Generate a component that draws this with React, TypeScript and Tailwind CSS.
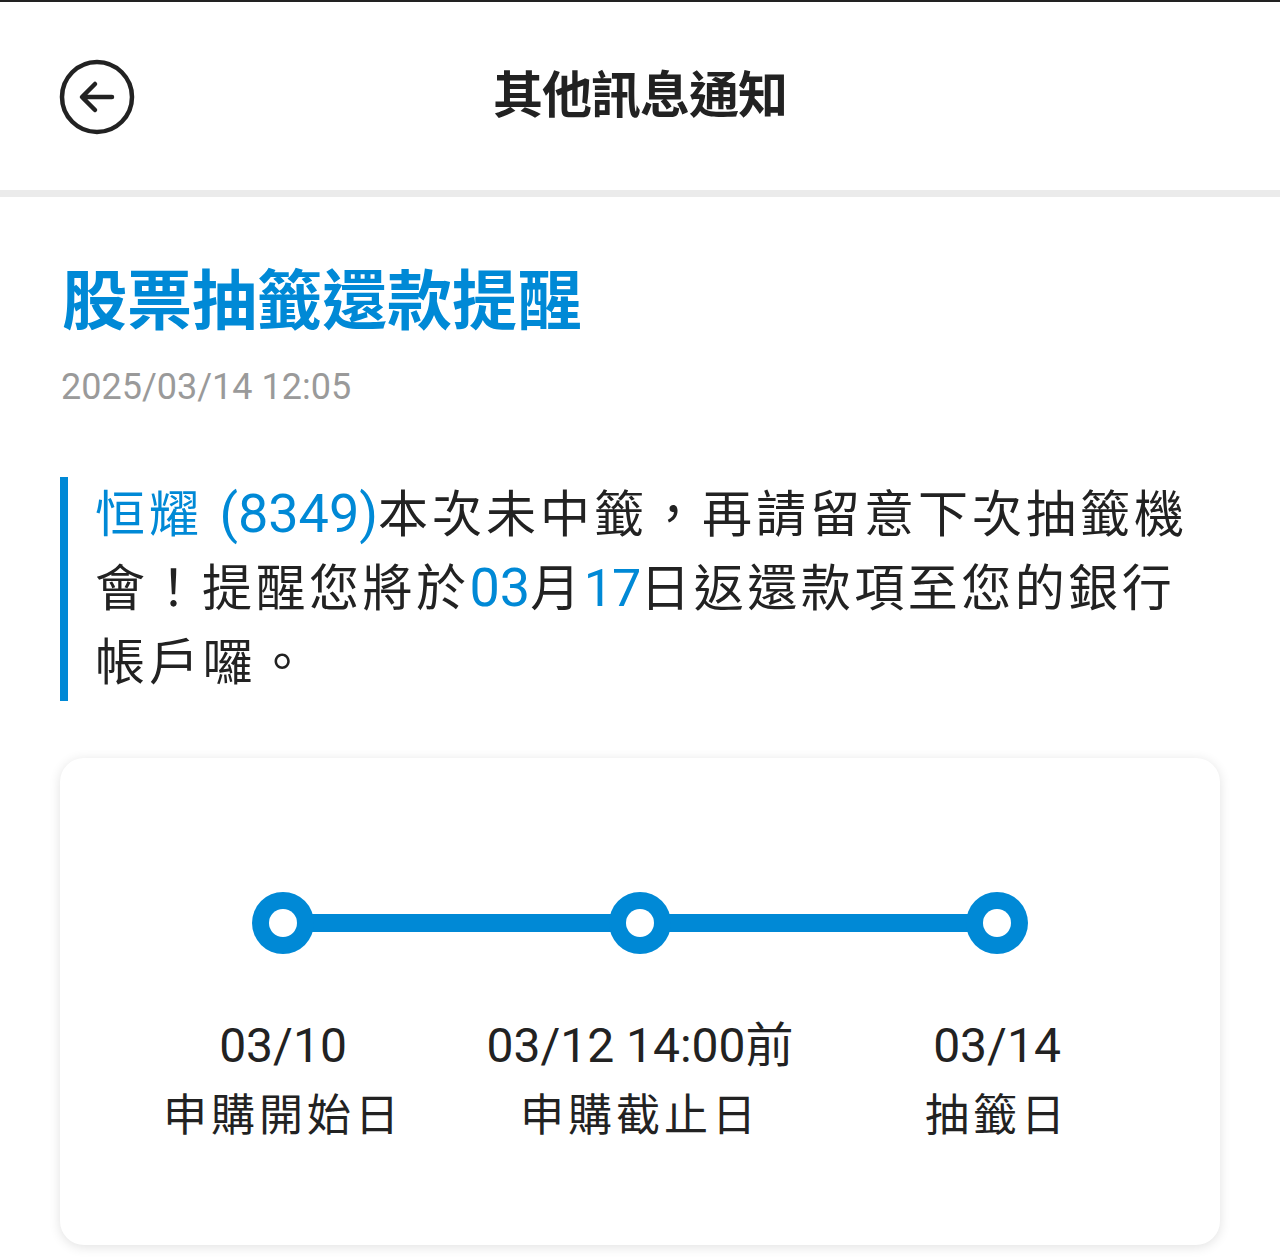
import React from 'react';

const steps = [
  { date: '03/10', label: '申購開始日' },
  { date: '03/12 14:00前', label: '申購截止日' },
  { date: '03/14', label: '抽籤日' },
];

function BackIcon(): React.JSX.Element {
  return (
    <svg width="76" height="76" viewBox="0 0 76 76" fill="none">
      <circle cx="38" cy="38" r="35" stroke="#222" strokeWidth="4.5" />
      <path d="M53 38H24M36 25L23 38l13 13" stroke="#222" strokeWidth="4.5" strokeLinecap="round" strokeLinejoin="round" />
    </svg>
  );
}

function Timeline(): React.JSX.Element {
  return (
    <div className="relative mx-auto h-[62px] w-[776px]">
      <div className="absolute left-[30px] right-[30px] top-[22px] h-[18px] bg-[#0089d6]" />
      <div className="relative flex justify-between">
        {steps.map((s) => (
          <div key={s.date} className="flex h-[62px] w-[62px] items-center justify-center rounded-full bg-[#0089d6]">
            <div className="h-[28px] w-[28px] rounded-full bg-white" />
          </div>
        ))}
      </div>
    </div>
  );
}

export default function App(): React.JSX.Element {
  return (
    <div
      className="min-h-[1259px] border-t-2 border-[#222] bg-white text-[#222]"
      style={{ fontFamily: 'Roboto, "Noto Sans CJK TC", sans-serif' }}
    >
      {/* Header */}
      <header className="relative flex h-[188px] items-center justify-center pb-[10px]">
        <div className="absolute left-[59px] top-[57px]">
          <BackIcon />
        </div>
        <h1 className="text-[50px] font-bold tracking-[-1px] text-[#222]" style={{ fontFamily: '"Noto Sans CJK TC", sans-serif' }}>
          其他訊息通知
        </h1>
      </header>
      <div className="h-[7px] bg-[#ebebeb]" />

      <main className="px-[60px]">
        <h2
          className="mt-[61px] pl-[2px] text-[65px] font-bold leading-[76px] text-[#0089d6]"
          style={{ fontFamily: '"Noto Sans CJK TC", sans-serif' }}
        >
          股票抽籤還款提醒
        </h2>
        <p className="mt-[31px] pl-[1px] text-[36px] leading-[44px] text-[#9a9a9a]">2025/03/14 12:05</p>

        <div className="mt-[68px] border-l-[8px] border-[#0089d6] pl-[27px]">
          <p className="py-[1px] text-[50px] leading-[74px] tracking-[4px] text-[#222]">
            <span className="text-[#0089d6]">
              恒耀 <span className="text-[54px] leading-[40px] tracking-[0px]">(8349)</span>
            </span>
            本次未中籤，再請留意下次抽籤機
            <br />
            <span className="tracking-[3.5px]">
              會！提醒您將於<span className="text-[54px] leading-[40px] tracking-[0px] text-[#0089d6]">03</span>月
              <span className="text-[52px] leading-[40px] tracking-[-1px] text-[#0089d6]">17</span>日返還款項至您的銀行
            </span>
            <br />
            帳戶囉。
          </p>
        </div>

        {/* Timeline card */}
        <section className="mt-[57px] h-[487px] rounded-[24px] bg-white pt-[134px] shadow-[0_2px_12px_rgba(0,0,0,0.12)]">
          <Timeline />
          <div className="mx-auto mt-[62px] grid w-[1071px] grid-cols-3 text-center">
            {steps.map((s) => (
              <div key={s.label} className="flex flex-col items-center">
                <span className="text-[48px] leading-[60px]">{s.date}</span>
                <span className="mt-[12px] text-[44px] leading-[56px] tracking-[4px]">{s.label}</span>
              </div>
            ))}
          </div>
        </section>
      </main>
    </div>
  );
}
